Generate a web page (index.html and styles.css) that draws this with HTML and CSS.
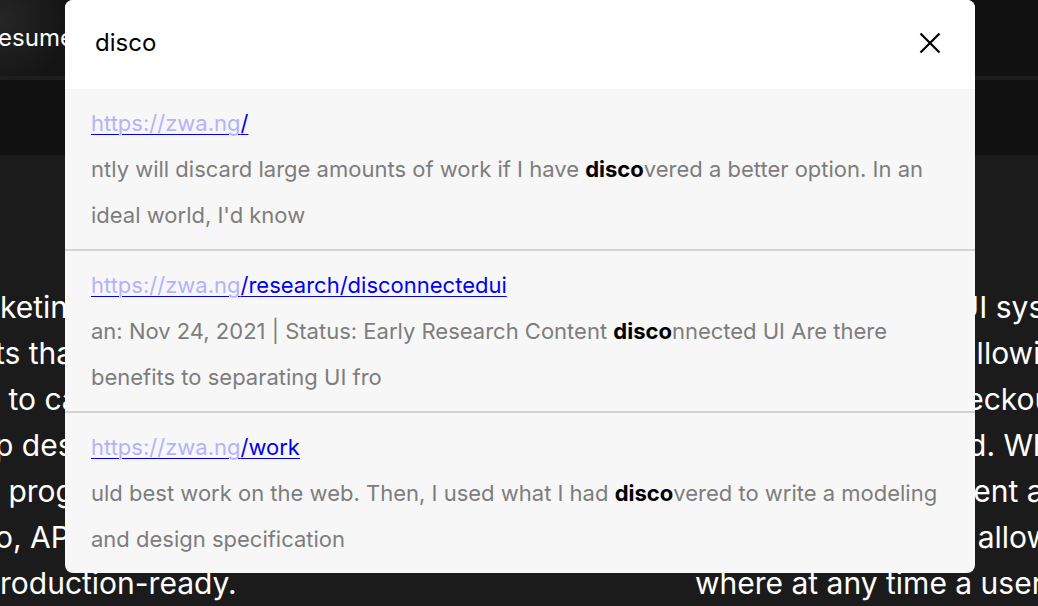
FILE: index.html
```html
<!DOCTYPE html>
<html lang="en">
<head>
<meta charset="utf-8">
<title>zwa.ng — search</title>
<link rel="stylesheet" href="styles.css">
</head>
<body>
  <header class="site-header">
    <nav class="nav">
      <a class="nav-link" href="#">Resume</a>
    </nav>
  </header>
  <div class="header-rule"></div>
  <div class="hero-band"></div>
  <main class="content">
    <div class="col col-left">
      <p class="line">keting sites and</p>
      <p class="line line-clip">ts that helped</p>
      <p class="line">&nbsp;to capture</p>
      <p class="line line-clip">p design</p>
      <p class="line">&nbsp;programming</p>
      <p class="line line-clip">o, APIs</p>
      <p class="line">roduction-ready.</p>
    </div>
    <div class="col col-right">
      <p class="line">across the shared UI systems</p>
      <p class="line">all payment flows, allowing</p>
      <p class="line">shipped into the checkout</p>
      <p class="line">it was soon received. When</p>
      <p class="line">required for a payment and</p>
      <p class="line">He designed this to allow</p>
      <p class="line">where at any time a user can</p>
    </div>
  </main>

  <div class="search-modal">
    <div class="search-head">
      <span class="search-query">disco</span>
      <button class="close-btn" aria-label="Close">
        <svg viewBox="0 0 22 22" width="22" height="22"><path d="M1.5 1.5 L20.5 20.5 M20.5 1.5 L1.5 20.5" stroke="#000" stroke-width="2.2" fill="none"/></svg>
      </button>
    </div>
    <ul class="results">
      <li class="result">
        <a class="result-url" href="#"><span class="host">https://zwa.ng</span><span class="path">/</span></a>
        <p class="snippet">ntly will discard large amounts of work if I have <b>disco</b>vered a better option. In an ideal world, I'd know</p>
      </li>
      <li class="result">
        <a class="result-url" href="#"><span class="host">https://zwa.ng</span><span class="path">/research/disconnectedui</span></a>
        <p class="snippet">an: Nov 24, 2021 | Status: Early Research Content <b>disco</b>nnected UI Are there benefits to separating UI fro</p>
      </li>
      <li class="result">
        <a class="result-url" href="#"><span class="host">https://zwa.ng</span><span class="path">/work</span></a>
        <p class="snippet">uld best work on the web. Then, I used what I had <b>disco</b>vered to write a modeling and design specification</p>
      </li>
    </ul>
  </div>
</body>
</html>
```

FILE: styles.css
```css
* { box-sizing: border-box; }

html, body {
  margin: 0;
  padding: 0;
}

body {
  background: #1b1b1b;
  color: #fff;
  font-family: Inter, "Noto Sans", sans-serif;
  overflow: hidden;
  height: 606px;
}

.site-header {
  height: 76px;
  background: radial-gradient(circle at 0 20px, #262626 0, #141414 70px, #111 140px);
  display: flex;
  align-items: center;
}

.nav {
  display: flex;
  align-items: center;
  margin-left: -17px;
}

.nav-link {
  color: #fff;
  text-decoration: none;
  font-size: 24px;
  line-height: 1;
}

.header-rule {
  height: 4px;
  background: #1e1e1e;
}

.hero-band {
  height: 75px;
  background: #111;
}

.content {
  display: grid;
  grid-template-columns: 695px 1fr;
  padding-top: 129px;
}

.col .line {
  margin: 0;
  font-size: 30px;
  line-height: 46px;
  white-space: nowrap;
}

.col-left {
  overflow: hidden;
}

.col .line-clip {
  text-indent: -5px;
}

.col-right {
  overflow: hidden;
}

/* search modal overlay */
.search-modal {
  position: fixed;
  top: 0;
  left: 65px;
  width: 910px;
  border-radius: 8px;
  overflow: hidden;
  background: #f7f7f7;
  color: #000;
}

.search-head {
  height: 89px;
  background: #fff;
  display: flex;
  align-items: center;
  justify-content: space-between;
  padding: 0 34px 4px 30px;
}

.search-query {
  font-size: 24px;
  color: #000;
}

.close-btn {
  border: 0;
  background: none;
  padding: 0;
  width: 22px;
  height: 22px;
  display: flex;
}

.results {
  list-style: none;
  margin: 0;
  padding: 0;
}

.result {
  padding: 11px 26px;
  border-bottom: 2px solid #d3d3d3;
}

.result:last-child {
  border-bottom: 0;
}

.result-url {
  display: block;
  font-size: 22px;
  line-height: 46px;
  text-decoration: underline;
  text-decoration-thickness: 1px;
  text-underline-offset: 3px;
}

.result-url .host {
  color: #b3b3fb;
}

.result-url .path {
  color: #0000ee;
}

.snippet {
  margin: 0;
  font-size: 22px;
  line-height: 46px;
  color: #7d7d7d;
}

.snippet b {
  color: #000;
  font-weight: 700;
}
```
